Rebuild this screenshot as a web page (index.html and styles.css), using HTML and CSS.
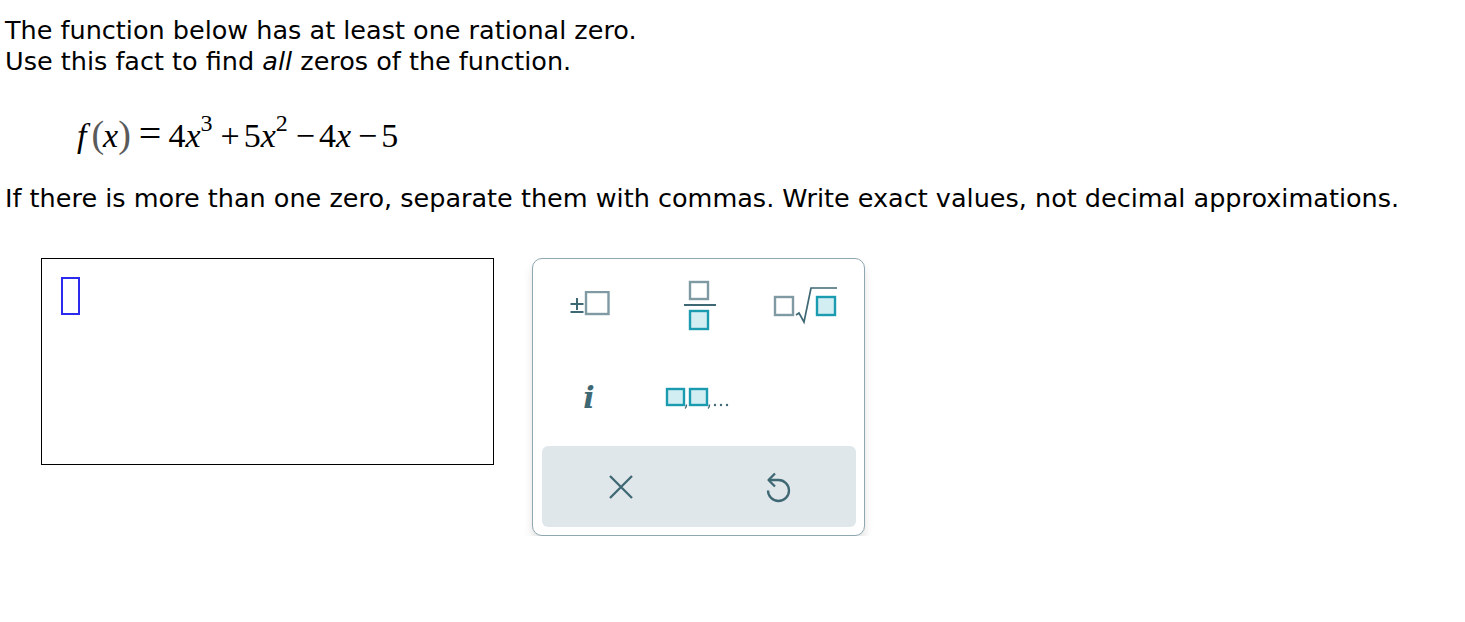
FILE: index.html
```html
<!DOCTYPE html>
<html>
<head>
<meta charset="utf-8">
<link rel="stylesheet" href="styles.css">
</head>
<body>
<div class="page">
  <p class="intro">The function below has at least one rational zero.<br>Use this fact to find <i>all</i> zeros of the function.</p>
  <div class="equation"><span class="it">f</span><span class="paren lp">(</span><span class="it vx">x</span><span class="paren rp">)</span><span class="rel">=</span><span class="num">4</span><span class="it vx">x</span><sup>3</sup><span class="bin">+</span><span class="num">5</span><span class="it vx">x</span><sup>2</sup><span class="bin">−</span><span class="num">4</span><span class="it vx">x</span><span class="bin">−</span><span class="num">5</span></div>
  <p class="instr">If there is more than one zero, separate them with commas. Write exact values, not decimal approximations.</p>
  <div class="answer-row">
    <div class="answer-box"><span class="cursor"></span></div>
    <div class="keypad">
      <div class="keys">
        <div class="key k1">
          <svg width="46" height="30" viewBox="0 0 46 30">
            <path d="M10 7v12M3.5 13h13M3.5 21h13" stroke="#3f6875" stroke-width="2" fill="none"/>
            <rect x="19" y="1" width="22.5" height="22" fill="none" stroke="#7f9aa2" stroke-width="2.4"/>
          </svg>
        </div>
        <div class="key k2">
          <svg width="34" height="52" viewBox="0 0 34 52">
            <rect x="7" y="2" width="18" height="17" fill="none" stroke="#7f9aa2" stroke-width="2.4"/>
            <path d="M1 25h32" stroke="#3f6875" stroke-width="2"/>
            <rect x="7" y="31" width="18" height="18" fill="#d2eef3" stroke="#1a9bb0" stroke-width="2.4"/>
          </svg>
        </div>
        <div class="key k3">
          <svg width="66" height="40" viewBox="0 0 66 40">
            <rect x="4" y="11" width="18" height="18" fill="none" stroke="#7f9aa2" stroke-width="2.4"/>
            <path d="M25 29l3-2 5 9 7-34h26" stroke="#3f6875" stroke-width="1.7" fill="none"/>
            <rect x="46" y="11" width="18" height="18" fill="#d2eef3" stroke="#1a9bb0" stroke-width="2.4"/>
          </svg>
        </div>
        <div class="key k4"><span class="imag">i</span></div>
        <div class="key k5">
          <svg width="70" height="26" viewBox="0 0 70 26">
            <rect x="3" y="3" width="17" height="16" fill="#d2eef3" stroke="#1a9bb0" stroke-width="2.4"/>
            <path d="M22.5 18.5q0 3-1.5 4" stroke="#3f6875" stroke-width="1.5" fill="none"/>
            <rect x="26" y="3" width="17" height="16" fill="#d2eef3" stroke="#1a9bb0" stroke-width="2.4"/>
            <path d="M45.5 18.5q0 3-1.5 4" stroke="#3f6875" stroke-width="1.5" fill="none"/>
            <circle cx="51" cy="19" r="1.2" fill="#3f6875"/>
            <circle cx="57" cy="19" r="1.2" fill="#3f6875"/>
            <circle cx="63" cy="19" r="1.2" fill="#3f6875"/>
          </svg>
        </div>
        <div class="key"></div>
      </div>
      <div class="actions">
        <div class="key act">
          <svg width="26" height="26" viewBox="0 0 26 26">
            <path d="M2 2l22 22M24 2L2 24" stroke="#3f6875" stroke-width="2.3" fill="none"/>
          </svg>
        </div>
        <div class="key act">
          <svg width="28" height="32" viewBox="0 0 28 32">
            <path d="M5 9h9.5A10.5 10.5 0 1 1 4 19.5" stroke="#3f6875" stroke-width="2.3" fill="none"/>
            <path d="M11 2.5L4.5 9L11 15.5" stroke="#3f6875" stroke-width="2.3" fill="none" stroke-linejoin="round"/>
          </svg>
        </div>
      </div>
    </div>
  </div>
</div>
</body>
</html>
```

FILE: styles.css
```css
html, body {
  margin: 0;
  padding: 0;
  background: #ffffff;
}
.page {
  padding: 15px 0 0 5px;
  font-family: "DejaVu Sans", Verdana, sans-serif;
  font-size: 25.5px;
  color: #000;
}
.intro {
  margin: 0;
  line-height: 31px;
}
.intro i {
  font-style: italic;
}
.equation {
  margin: 39px 0 0 72px;
  font-family: "Liberation Serif", "Times New Roman", serif;
  font-size: 34px;
  line-height: 40px;
  height: 40px;
  white-space: nowrap;
}
.equation span,
.equation sup {
  display: inline-block;
}
.equation .it {
  font-style: italic;
}
.equation .paren {
  color: #5a5a5a;
  font-size: 38px;
  line-height: 0;
}
.equation .lp {
  margin-left: 5px;
}
.equation .lp + .vx {
  margin-left: -1px;
}
.equation .rel {
  font-size: 40px;
  line-height: 0;
  margin: 0 7px 0 8px;
}
.equation .bin {
  margin: 0 4px 0 7px;
}
.equation sup {
  font-size: 24px;
  line-height: 0;
  vertical-align: 0;
  position: relative;
  top: -16px;
  margin-right: 1px;
}
.instr {
  margin: 27px 0 0 0;
  line-height: 31px;
}
.answer-row {
  display: flex;
  align-items: flex-start;
  margin-top: 44px;
  margin-left: 36px;
}
.answer-box {
  width: 451px;
  height: 205px;
  border: 1px solid #000;
  box-sizing: content-box;
}
.cursor {
  display: block;
  width: 19px;
  height: 38px;
  border: 2px solid #2b2bf0;
  margin: 18px 0 0 19px;
  box-sizing: border-box;
}
.keypad {
  margin-left: 38px;
  width: 333px;
  height: 278px;
  border: 1px solid #8ea7b0;
  border-radius: 10px;
  box-sizing: border-box;
  padding: 0 8px 8px 9px;
  background: #fff;
  box-shadow: 0 6px 9px rgba(0, 0, 0, 0.12);
  display: flex;
  flex-direction: column;
}
.keys {
  display: grid;
  grid-template-columns: 100px 108px 106px;
  grid-template-rows: 93px 94px;
  height: 187px;
}
.key {
  display: flex;
  align-items: center;
  justify-content: center;
}
.k1 { padding-right: 4px; }
.k2 { padding-left: 8px; }
.k3 { padding-left: 1px; }
.k4 { padding-right: 6px; padding-bottom: 4px; }
.k5 { padding-left: 6px; }
.imag {
  font-family: "DejaVu Serif", "Liberation Serif", serif;
  font-style: italic;
  font-weight: bold;
  font-size: 30px;
  color: #3f6875;
}
.actions {
  background: #e0e7ea;
  border-radius: 6px;
  height: 81px;
  display: grid;
  grid-template-columns: 1fr 1fr;
}
```
